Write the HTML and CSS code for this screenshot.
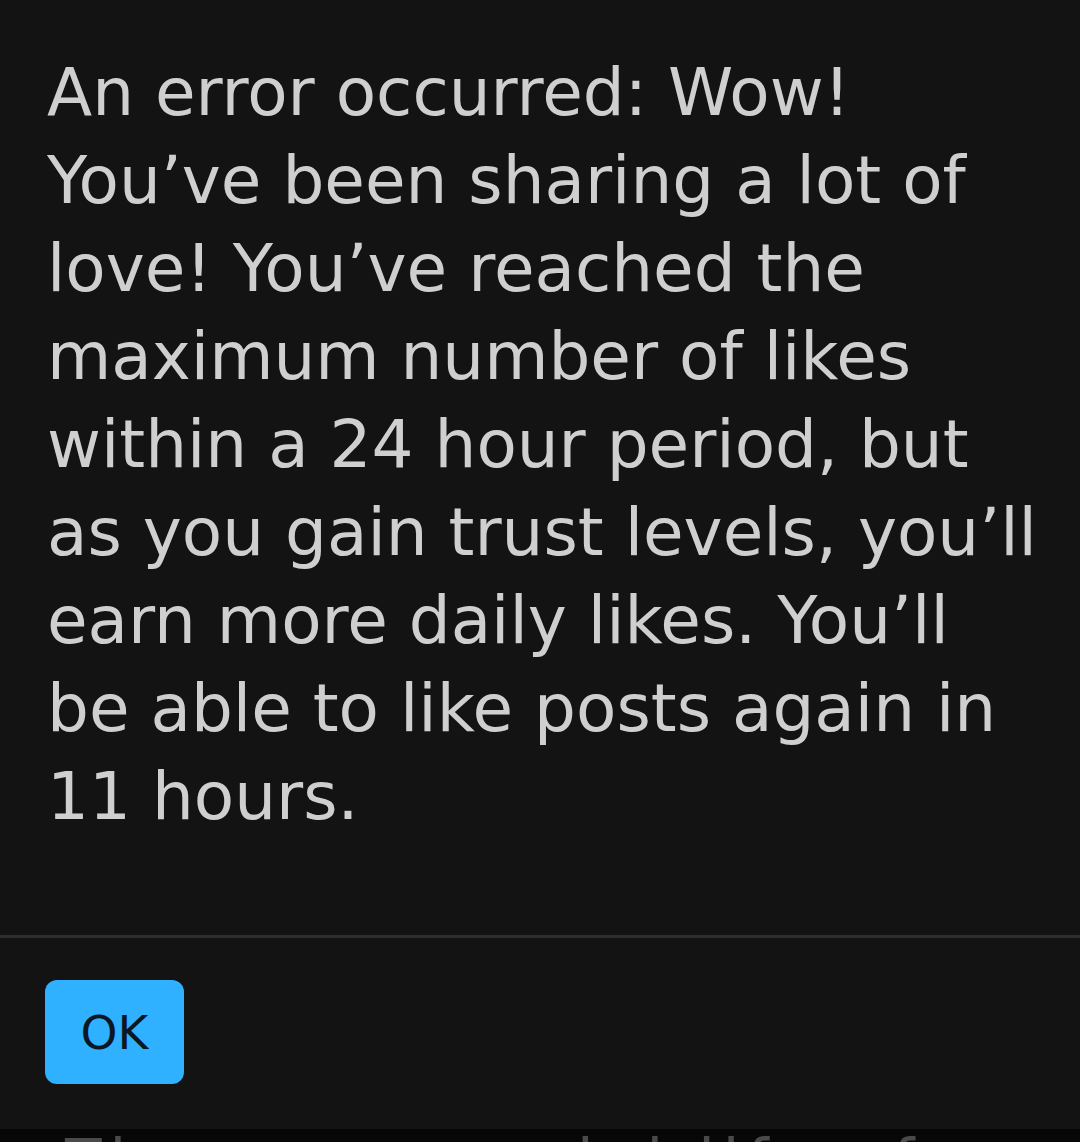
FILE: index.html
```html
<!DOCTYPE html>
<html lang="en">
<head>
<meta charset="utf-8">
<title>Error</title>
<link rel="stylesheet" href="styles.css">
</head>
<body>
<div class="modal">
  <div class="modal-body">
    <p class="message">An error occurred: Wow! You’ve been sharing a lot of love! You’ve reached the maximum number of likes within a 24 hour period, but as you gain trust levels, you’ll earn more daily likes. You’ll be able to like posts again in 11 hours.</p>
  </div>
  <div class="modal-footer">
    <button class="btn-ok" type="button">OK</button>
  </div>
</div>
<div class="behind">
  <p class="behind-text">There are social life of action</p>
</div>
</body>
</html>
```

FILE: styles.css
```css
html, body {
  margin: 0;
  padding: 0;
  background: #070707;
}
body {
  width: 1080px;
  height: 1142px;
  overflow: hidden;
  font-family: "DejaVu Sans", "Noto Sans", sans-serif;
}
.modal {
  background: #131313;
  height: 1129px;
  display: flex;
  flex-direction: column;
}
.modal-body {
  padding: 49px 33px 0 47px;
  height: 938px;
  box-sizing: border-box;
  border-bottom: 3px solid #2e2e2e;
  flex: none;
}
.message {
  margin: 0;
  color: #cfcfcf;
  font-size: 66px;
  line-height: 88px;
  letter-spacing: 0;
}
.modal-footer {
  padding: 42px 45px 0;
}
.btn-ok {
  width: 139px;
  height: 104px;
  border: none;
  border-radius: 12px;
  background: #2fb1ff;
  color: #0b1722;
  font-family: "DejaVu Sans", "Noto Sans", sans-serif;
  font-size: 47px;
  padding: 0;
  cursor: pointer;
}
.behind {
  height: 13px;
  overflow: hidden;
  background: #070707;
}
.behind-text {
  margin: 2px 0 0 65px;
  color: #4a4a4a;
  font-size: 60px;
  line-height: 60px;
  letter-spacing: 8px;
}
```
